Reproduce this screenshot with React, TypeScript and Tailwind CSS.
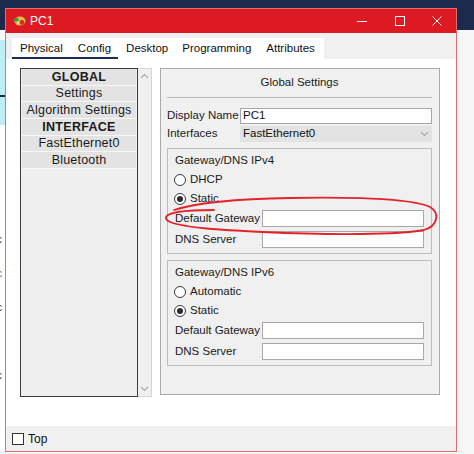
import React from 'react';

const font = "font-['Liberation_Sans',Arial,sans-serif]";

function Radio({ checked, label }: { checked?: boolean; label: string }) {
  return (
    <div className="flex h-[19px] items-center pl-[6px]">
      <span className="flex h-[12px] w-[12px] items-center justify-center rounded-full border border-[#3a3a3a] bg-white">
        {checked && <span className="h-[6px] w-[6px] rounded-full bg-[#2a2a2a]" />}
      </span>
      <span className="ml-[4px] text-[11.5px] text-[#1a1a1a]">{label}</span>
    </div>
  );
}

function Field({ label }: { label: string }) {
  return (
    <div className="flex h-[21px] items-center">
      <span className="w-[94px] shrink-0 whitespace-nowrap pl-[7px] text-[11.5px] text-[#1a1a1a]">{label}</span>
      <div className="h-[17px] flex-1 border border-[#a8a8a8] bg-white" />
    </div>
  );
}

function GatewayGroup({ version, first }: { version: string; first: string }) {
  return (
    <div className="flex flex-col border border-[#bdbdbd] pb-[3px] pr-[7px] pt-[2px]">
      <div className="flex h-[19px] items-center pl-[7px] text-[11.5px] text-[#1a1a1a]">Gateway/DNS {version}</div>
      <Radio label={first} />
      <Radio checked label="Static" />
      <Field label="Default Gateway" />
      <Field label="DNS Server" />
    </div>
  );
}

function Chevron({ up }: { up?: boolean }) {
  return (
    <svg width="9" height="6" viewBox="0 0 9 6" className="text-[#a9a9a9]">
      <path d={up ? 'M1 5 L4.5 1.5 L8 5' : 'M1 1 L4.5 4.5 L8 1'} fill="none" stroke="currentColor" strokeWidth="1.1" />
    </svg>
  );
}

const listRows = [
  { t: 'GLOBAL', b: true },
  { t: 'Settings' },
  { t: 'Algorithm Settings' },
  { t: 'INTERFACE', b: true },
  { t: 'FastEthernet0' },
  { t: 'Bluetooth' },
];

export default function App() {
  return (
    <div className={`relative h-[454px] w-[474px] overflow-hidden bg-[#f6f6f6] ${font}`}>
      {/* desktop behind the window */}
      <div className="h-[30px] bg-[#1b2a4d]" />
      <div className="flex h-[424px]">
        <div className="flex w-[5px] flex-col">
          <div className="h-[10px] bg-white" />
          <div className="h-[55px] bg-[#bdeef4]" />
          <div className="h-[2px] bg-[#1b2a4d]" />
          <div className="h-[28px] bg-[#bdeef4]" />
          <div className="flex flex-1 flex-col gap-[24px] overflow-hidden bg-white pt-[110px] text-[10px] leading-none text-[#333]">
            <span className="-ml-[3px]">c</span>
            <span className="-ml-[3px] text-[#3b6fc4]">c</span>
            <span className="-ml-[3px]">c</span>
            <span className="-ml-[3px]">i</span>
            <span className="-ml-[3px]">c</span>
            <span className="-ml-[3px]">i</span>
          </div>
        </div>
      </div>

      {/* PC1 window */}
      <div className="absolute left-[5px] top-[8px] flex h-[444px] w-[452px] flex-col border border-[#e07070] bg-white">
        {/* title bar */}
        <div className="flex h-[24px] shrink-0 items-center bg-[#dd1a22] text-white">
          <svg width="14" height="12" viewBox="0 0 14 12" className="ml-[6px]">
            <ellipse cx="8" cy="6" rx="5.5" ry="4.5" fill="#e9b84a" />
            <path d="M1 5 C3 2, 6 2, 7 5 C5 7, 3 7, 1 5 Z" fill="#3d9a3a" />
            <circle cx="10" cy="7.5" r="2.4" fill="#c0392b" />
            <circle cx="6" cy="8" r="1.3" fill="#f3e3a0" />
          </svg>
          <span className="ml-[4px] text-[12px]">PC1</span>
          <div className="ml-auto flex items-center">
            <svg width="10" height="10" viewBox="0 0 10 10" className="mr-[28px]">
              <path d="M0 5.5 H10" stroke="white" strokeWidth="1" />
            </svg>
            <svg width="10" height="10" viewBox="0 0 10 10" className="mr-[27px]">
              <rect x="0.5" y="0.5" width="9" height="9" fill="none" stroke="white" strokeWidth="1" />
            </svg>
            <svg width="10" height="10" viewBox="0 0 10 10" className="mr-[14px]">
              <path d="M0.5 0.5 L9.5 9.5 M9.5 0.5 L0.5 9.5" stroke="white" strokeWidth="1" />
            </svg>
          </div>
        </div>

        {/* tab strip */}
        <div className="flex h-[26px] shrink-0 items-end bg-[#f0f0f0] pl-[6px]">
          <div className="flex h-[21px] w-[312px] items-stretch bg-white text-[11.5px] text-[#111]">
            <div className="flex items-center gap-[15px] border-b-[2.5px] border-[#1d2b55] pl-[8px] pr-[7px] pt-[2px]">
              <span>Physical</span>
              <span>Config</span>
            </div>
            <div className="flex items-center gap-[14px] pl-[8px]">
              <span>Desktop</span>
              <span>Programming</span>
              <span className="ml-[1px]">Attributes</span>
            </div>
          </div>
        </div>

        {/* tab page */}
        <div className="flex h-[367px] shrink-0 bg-white pl-[14px] pt-[9px]">
          {/* left list */}
          <div className="flex h-[329px] w-[118px] flex-col border border-[#3c3c3c] bg-[#efefef] px-[1px]">
            {listRows.map((r) => (
              <div
                key={r.t}
                className={`flex h-[16.7px] items-center justify-center border-b border-[#f8f8f8] bg-[#e3e3e3] text-[12.5px] leading-none text-[#1a1a1a] ${r.b ? 'font-bold tracking-[0.3px]' : 'tracking-[0.2px]'}`}
              >
                {r.t}
              </div>
            ))}
          </div>
          {/* scrollbar */}
          <div className="flex h-[329px] w-[14px] flex-col items-center justify-between border border-l-0 border-[#d6d6d6] bg-[#f0f0f0] py-[4px]">
            <Chevron up />
            <Chevron />
          </div>

          {/* right panel */}
          <div className="ml-[8px] flex h-[327px] w-[280px] flex-col border border-[#aaaaaa] bg-[#f0f0f0] pl-[6px] pr-[7px]">
            <div className="flex h-[28px] items-center justify-center text-[11.5px] text-[#1a1a1a]">Global Settings</div>
            <div className="h-px bg-[#bdbdbd]" />
            <div className="mt-[10px] flex h-[16px] items-center">
              <span className="w-[73px] shrink-0 whitespace-nowrap text-[11.5px] text-[#1a1a1a]">Display Name</span>
              <div className="flex h-[16px] flex-1 items-center border border-[#a8a8a8] bg-white pl-[2px] text-[11.5px] text-[#111]">PC1</div>
            </div>
            <div className="mt-[2px] flex h-[16px] items-center">
              <span className="w-[73px] shrink-0 text-[11.5px] text-[#1a1a1a]">Interfaces</span>
              <div className="flex h-[16px] flex-1 items-center justify-between bg-[#e3e3e3] px-[3px] text-[11.5px] text-[#111]">
                <span>FastEthernet0</span>
                <Chevron />
              </div>
            </div>
            <div className="mt-[6px]">
              <GatewayGroup version="IPv4" first="DHCP" />
            </div>
            <div className="mt-[6px]">
              <GatewayGroup version="IPv6" first="Automatic" />
            </div>
          </div>
        </div>

        {/* bottom bar */}
        <div className="flex h-[25px] shrink-0 items-center bg-[#f0f0f0] pl-[6px]">
          <span className="h-[12px] w-[12px] border border-[#333] bg-white" />
          <span className="ml-[4px] text-[12px] text-[#111]">Top</span>
        </div>
      </div>

      {/* hand-drawn red mark */}
      <svg className="pointer-events-none absolute left-0 top-0" width="474" height="454" viewBox="0 0 474 454">
        <path
          d="M174 210 C196 203, 232 199, 290 198 C350 197, 410 198, 430 207 C440 213, 438 226, 424 230 C400 235, 330 235, 262 232 C222 230, 186 228, 170 222 C162 218, 166 214, 178 212 C190 210, 200 210, 214 210"
          fill="none"
          stroke="#e2232b"
          strokeWidth="1.8"
          strokeLinecap="round"
        />
      </svg>
    </div>
  );
}
